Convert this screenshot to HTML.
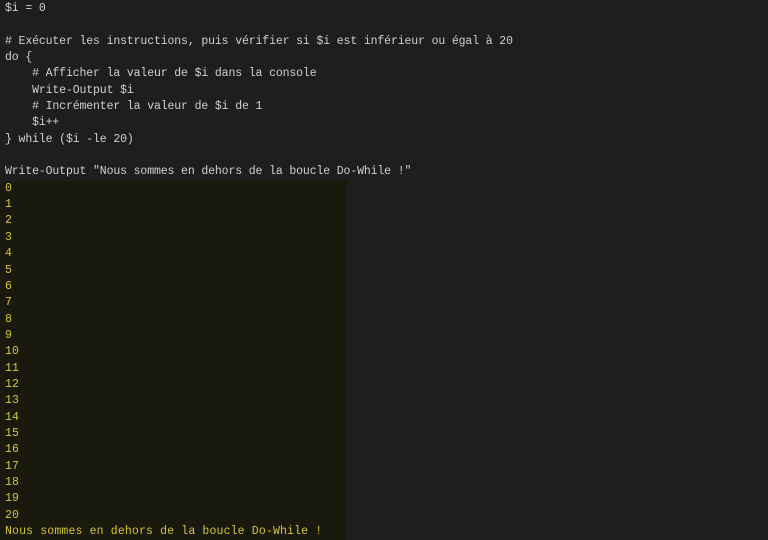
<!DOCTYPE html>
<html><head><meta charset="utf-8"><style>
html,body{margin:0;padding:0;width:768px;height:540px;overflow:hidden;background:#1e1e1e;}
.wrap{position:relative;width:768px;height:540px;}
.out{position:absolute;left:0;top:181px;width:347px;height:359px;background:#19190d;}
pre{position:absolute;left:5px;top:1px;margin:0;font-family:"Liberation Mono",monospace;font-size:11.5px;letter-spacing:-0.13px;line-height:16.35px;color:#d0d0d0;}
.y{color:#d4c53c;letter-spacing:0.15px;}
</style></head><body><div class="wrap"><div class="out"></div>
<pre>$i = 0

# Exécuter les instructions, puis vérifier si $i est inférieur ou égal à 20
do {
    # Afficher la valeur de $i dans la console
    Write-Output $i
    # Incrémenter la valeur de $i de 1
    $i++
} while ($i -le 20)

Write-Output "Nous sommes en dehors de la boucle Do-While !"
<span class="y">0
1
2
3
4
5
6
7
8
9
10
11
12
13
14
15
16
17
18
19
20
Nous sommes en dehors de la boucle Do-While !</span></pre></div></body></html>
